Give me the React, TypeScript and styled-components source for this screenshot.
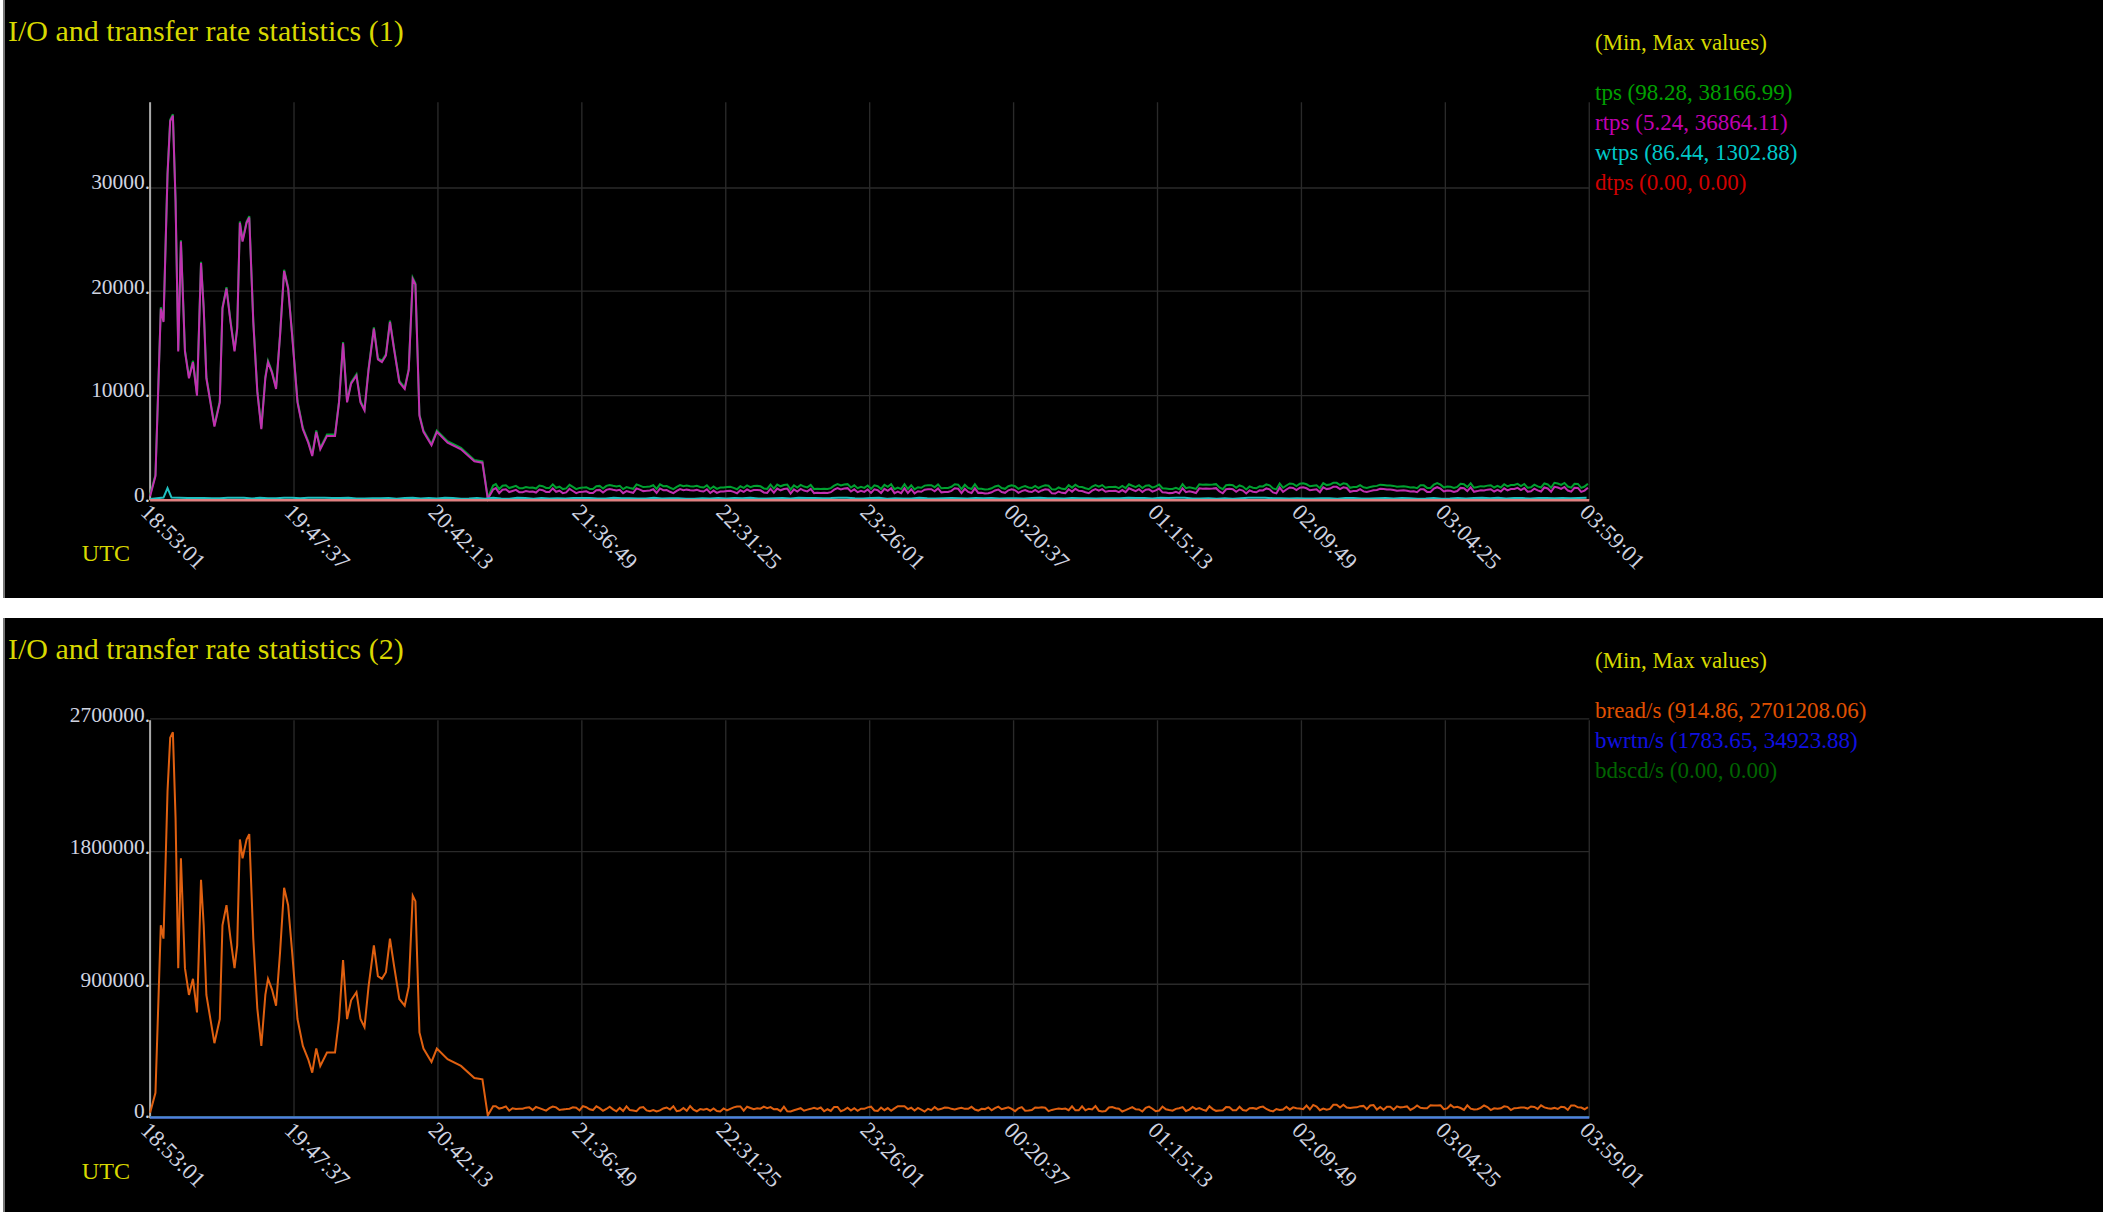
import React, { useMemo } from "react";
import styled, { createGlobalStyle } from "styled-components";

const GlobalStyle = createGlobalStyle`
    body {
        margin: 0;
        background: #fff;
        font-family: "Liberation Serif", serif;
    }
`;

const Page = styled.div`
    display: flex;
    flex-direction: column;
    gap: 20px;
    padding-left: 3px;
`;

const Panel = styled.div<{ $height: number }>`
    display: flex;
    height: ${props => props.$height}px;
    background: #000;
    border-left: 2px solid #777;
    overflow: hidden;
`;

const ChartColumn = styled.div`
    display: flex;
    flex-direction: column;
    width: 1590px;
    flex-shrink: 0;

    svg {
        overflow: visible;
    }
`;

const Title = styled.div`
    height: 54px;
    padding: 13px 0 0 3px;
    box-sizing: border-box;
    font-size: 30px;
    line-height: 36px;
    color: #d8d800;
`;

const Legend = styled.div`
    display: flex;
    flex-direction: column;
    padding-top: 28px;
    font-size: 23px;
    line-height: 30px;
`;

const LegendHead = styled.div`
    color: #d8d800;
    line-height: 30px;
    margin-bottom: 20px;
`;

const LegendItem = styled.div<{ $color: string }>`
    color: ${props => props.$color};
`;

// plot geometry in "display" units (svg viewBox), scaled by the svg width
const X0 = 108;
const X1 = 1182;
const TOP = 76;
const BOTTOM = 373;
const TICKS = ["18:53:01", "19:47:37", "20:42:13", "21:36:49", "22:31:25", "23:26:01", "00:20:37", "01:15:13", "02:09:49", "03:04:25", "03:59:01"];

const KEYS: [number, number][] = [
    [108, 370], [112, 355], [116, 230], [118, 240], [121, 130], [123, 90], [125, 86], [127, 150], [129, 262], [131, 180],
    [134, 262], [137, 282], [140, 270], [143, 295], [146, 196], [148, 230], [150, 282], [153, 300], [156, 318], [160, 300],
    [162, 230], [165, 215], [168, 240], [171, 262], [173, 245], [175, 166], [177, 180], [180, 166], [182, 162], [185, 240],
    [188, 292], [191, 320], [194, 282], [196, 270], [199, 278], [202, 290], [205, 250], [208, 202], [211, 215], [214, 250],
    [218, 300], [222, 320], [226, 330], [229, 340], [232, 322], [235, 335], [240, 325], [246, 325], [249, 300], [252, 256],
    [255, 300], [258, 286], [262, 280], [265, 300], [268, 306], [271, 276], [275, 245], [278, 268], [281, 270], [284, 265],
    [287, 240], [290, 260], [294, 285], [298, 290], [301, 276], [304, 208], [306, 212], [309, 310], [312, 322], [318, 332],
    [322, 322], [330, 330], [340, 335], [350, 344], [356, 345], [360, 372], [364, 365],
];

function rng(seed: number) {
    let s = seed;
    return () => {
        s = (s * 16807) % 2147483647;
        return s / 2147483647;
    };
}

function mainSeries(seed: number, flatY: number) {
    const r = rng(seed);
    const pts: [number, number][] = [...KEYS];
    for (let x = 366; x <= X1; x += 2.5) {
        pts.push([x, flatY + (r() - 0.5) * 4 - (x > 950 ? 1 : 0)]);
    }
    return pts;
}

const toPath = (pts: [number, number][], dy = 0) =>
    pts.map(([x, y], i) => `${i ? "L" : "M"}${x.toFixed(1)},${(y + dy).toFixed(1)}`).join(" ");

type Line = { d: string; color: string; width?: number };

const Chart = ({ yLabels, grid, lines }: { yLabels: [string, number][]; grid: number[]; lines: Line[] }) => (
    <svg width={1590} height={536} viewBox="0 40 1186 400">
        {grid.map(y => <line key={y} x1={X0} x2={X1} y1={y} y2={y} stroke="#2a2a2a" strokeWidth={1} />)}
        {TICKS.map((_, i) => {
            const x = X0 + (i * (X1 - X0)) / 10;
            return <line key={i} x1={x} x2={x} y1={TOP} y2={BOTTOM} stroke="#2a2a2a" strokeWidth={1} />;
        })}
        <line x1={X0} x2={X0} y1={TOP} y2={BOTTOM} stroke="#aaa" strokeWidth={1.5} />
        {yLabels.map(([t, y]) => (
            <text key={t} x={108} y={y + 5} textAnchor="end" fontSize={16} fill="#d0d4e0" fontFamily="Liberation Serif">{t}</text>
        ))}
        {lines.map((l, i) => <path key={i} d={l.d} fill="none" stroke={l.color} strokeWidth={l.width ?? 1.5} />)}
        {TICKS.map((t, i) => {
            const x = X0 + (i * (X1 - X0)) / 10 - 8;
            return (
                <text key={t} x={x} y={383} fontSize={17} fill="#d0d4e0" fontFamily="Liberation Serif" transform={`rotate(45 ${x} 383)`}>{t}</text>
            );
        })}
        <text x={57} y={418} fontSize={18} fill="#d8d800" fontFamily="Liberation Serif">UTC</text>
    </svg>
);

export default function App() {
    const charts = useMemo(() => {
        const rtps = mainSeries(7, 366);
        const tps = rtps.map(([x, y]) => [x, x > 362 ? y - 3 : y - 1] as [number, number]);
        const r = rng(3);
        const wtps: [number, number][] = [[108, 372], [118, 371], [121, 364], [124, 371]];
        for (let x = 130; x <= X1; x += 6) wtps.push([x, 371.5 + (r() - 0.5) * 0.8]);
        const bread = mainSeries(11, 367);
        return {
            top: [
                { d: toPath(tps), color: "#00a030" },
                { d: toPath(rtps), color: "#c030b0" },
                { d: toPath(wtps), color: "#20c0c0" },
                { d: `M${X0},373 L${X1},373`, color: "#e08080", width: 2 },
            ],
            bottom: [
                { d: `M${X0},372 L${X1},372`, color: "#006400", width: 1 },
                { d: toPath(bread, -1), color: "#e06010" },
                { d: `M${X0},372.5 L${X1},372.5`, color: "#5080e0", width: 1.8 },
            ],
        };
    }, []);

    return (
        <Page>
            <GlobalStyle />
            <Panel $height={598}>
                <ChartColumn>
                    <Title>I/O and transfer rate statistics (1)</Title>
                    <Chart
                        yLabels={[["30000.", 136], ["20000.", 214], ["10000.", 291], ["0.", 369]]}
                        grid={[140, 217, 295]}
                        lines={charts.top}
                    />
                </ChartColumn>
                <Legend>
                    <LegendHead>(Min, Max values)</LegendHead>
                    <LegendItem $color="#00a000">tps (98.28, 38166.99)</LegendItem>
                    <LegendItem $color="#c000b0">rtps (5.24, 36864.11)</LegendItem>
                    <LegendItem $color="#00c8c8">wtps (86.44, 1302.88)</LegendItem>
                    <LegendItem $color="#d00000">dtps (0.00, 0.00)</LegendItem>
                </Legend>
            </Panel>
            <Panel $height={594}>
                <ChartColumn>
                    <Title>I/O and transfer rate statistics (2)</Title>
                    <Chart
                        yLabels={[["2700000.", 72], ["1800000.", 171], ["900000.", 270], ["0.", 368]]}
                        grid={[75, 174, 273]}
                        lines={charts.bottom}
                    />
                </ChartColumn>
                <Legend>
                    <LegendHead>(Min, Max values)</LegendHead>
                    <LegendItem $color="#e05000">bread/s (914.86, 2701208.06)</LegendItem>
                    <LegendItem $color="#1010e0">bwrtn/s (1783.65, 34923.88)</LegendItem>
                    <LegendItem $color="#006400">bdscd/s (0.00, 0.00)</LegendItem>
                </Legend>
            </Panel>
        </Page>
    );
}
